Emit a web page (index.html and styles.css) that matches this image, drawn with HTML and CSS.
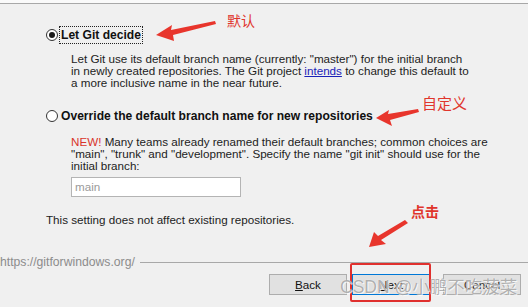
FILE: index.html
```html
<!DOCTYPE html>
<html>
<head>
<meta charset="utf-8">
<link rel="stylesheet" href="styles.css">
</head>
<body>
<div class="page">
  <div class="topline"></div>
  <div class="content">
    <div class="option first">
      <span class="radio checked"></span>
      <span class="title focus">Let Git decide</span>
    </div>
    <div class="desc d1">Let Git use its default branch name (currently: "master") for the initial branch<br>in newly created repositories. The Git project <a class="link">intends</a> to change this default to<br>a more inclusive name in the near future.</div>
    <div class="option second">
      <span class="radio"></span>
      <span class="title">Override the default branch name for new repositories</span>
    </div>
    <div class="desc d2"><span class="new">NEW!</span> Many teams already renamed their default branches; common choices are<br>"main", "trunk" and "development". Specify the name "git init" should use for the<br>initial branch:</div>
    <div class="inputbox">main</div>
    <div class="note">This setting does not affect existing repositories.</div>
  </div>
  <div class="sepline">
    <span class="url">https://gitforwindows.org/</span>
    <span class="rule"></span>
  </div>
  <div class="buttons">
    <div class="btn back"><u>B</u>ack</div>
    <div class="btn next"><u>N</u>ext</div>
    <div class="btn cancel">Cancel</div>
  </div>

  <svg class="arrows" width="528" height="307" viewBox="0 0 528 307">
    <polygon fill="#e8352c" points="156,35 172,25 171,30 215,21 216,24 173,35 174,41"/>
    <polygon fill="#e8352c" points="376,118 389,110 388,114 418,109 419,112 390,120 392,126"/>
    <polygon fill="#e8352c" points="369,247 374,232 378,236 405,220 408,223 381,240 386,244"/>
  </svg>
  <div class="ann a1">默认</div>
  <div class="ann a2">自定义</div>
  <div class="ann a3">点击</div>
  <div class="redbox"></div>
  <div class="watermark">CSDN @小鹏不吃菠菜</div>
</div>
</body>
</html>
```
FILE: styles.css
```css
html, body {
  margin: 0;
  padding: 0;
}
body {
  background: #f0f0f0;
  font-family: "Liberation Sans", Arial, sans-serif;
  font-size: 11.65px;
  color: #1a1a1a;
}
.page {
  position: relative;
  width: 528px;
  height: 307px;
  overflow: hidden;
}
.topline {
  height: 3px;
  background: #fafafa;
  border-bottom: 1px solid #a8a8a8;
}
.content {
  padding-left: 46px;
}
.option {
  display: flex;
  align-items: center;
  height: 16px;
}
.option.first {
  margin-top: 23px;
}
.option.second {
  margin-top: 19px;
}
.radio {
  width: 10px;
  height: 10px;
  border: 1px solid #333;
  border-radius: 50%;
  background: #fff;
  display: flex;
  align-items: center;
  justify-content: center;
  margin-right: 1px;
}
.radio.checked::after {
  content: "";
  width: 6px;
  height: 6px;
  border-radius: 50%;
  background: #1a1a1a;
}
.title {
  font-weight: bold;
  font-size: 12.1px;
  color: #111;
  padding: 1px 1px;
  border: 1px solid transparent;
}
.title.focus {
  border: 1px dotted #222;
}
.desc {
  margin-left: 25px;
  line-height: 12px;
  color: #222;
}
.desc.d1 {
  margin-top: 10px;
}
.desc.d2 {
  margin-top: 12px;
}
.link {
  color: #1a22b8;
  text-decoration: underline;
}
.new {
  color: #d9342b;
}
.inputbox {
  margin-left: 25px;
  margin-top: 5px;
  width: 165px;
  height: 18px;
  border: 1px solid #b4b4b4;
  background: #fff;
  color: #9a9a9a;
  line-height: 18px;
  padding-left: 3px;
}
.note {
  margin-top: 17px;
  line-height: 12px;
  color: #222;
}
.sepline {
  display: flex;
  align-items: center;
  margin-top: 30px;
  height: 12px;
}
.url {
  color: #8c8c8c;
  font-size: 12.2px;
}
.rule {
  flex: 1;
  height: 1px;
  background: #a8a8a8;
  margin-left: 5px;
}
.buttons {
  display: flex;
  margin-top: 6px;
  padding-left: 269px;
}
.btn {
  width: 76px;
  height: 19px;
  border: 1px solid #adadad;
  background: #e1e1e1;
  display: flex;
  align-items: center;
  justify-content: center;
  color: #111;
}
.btn.next {
  margin-left: 5px;
  border-color: #0078d7;
}
.btn.cancel {
  margin-left: 13px;
}
.arrows {
  position: absolute;
  left: 0;
  top: 0;
}
.ann {
  position: absolute;
  color: #e0352c;
  font-family: "Noto Sans CJK SC", sans-serif;
  font-size: 14px;
  line-height: 16px;
}
.a1 { left: 227px; top: 12px; }
.a2 { left: 422px; top: 95px; font-size: 15px; }
.a3 { left: 411px; top: 203px; font-weight: bold; }
.redbox {
  position: absolute;
  left: 350px;
  top: 263px;
  width: 77px;
  height: 35px;
  border: 2px solid #e0302e;
  border-radius: 2px;
}
.watermark {
  position: absolute;
  left: 340px;
  top: 277px;
  font-family: "Liberation Sans", "Noto Sans CJK SC", sans-serif;
  font-size: 17.5px;
  line-height: 20px;
  color: rgba(110, 110, 110, 0.55);
  text-shadow: 0 0 1px #fff, 1px 1px 0 rgba(255,255,255,0.7);
  white-space: nowrap;
}
```
